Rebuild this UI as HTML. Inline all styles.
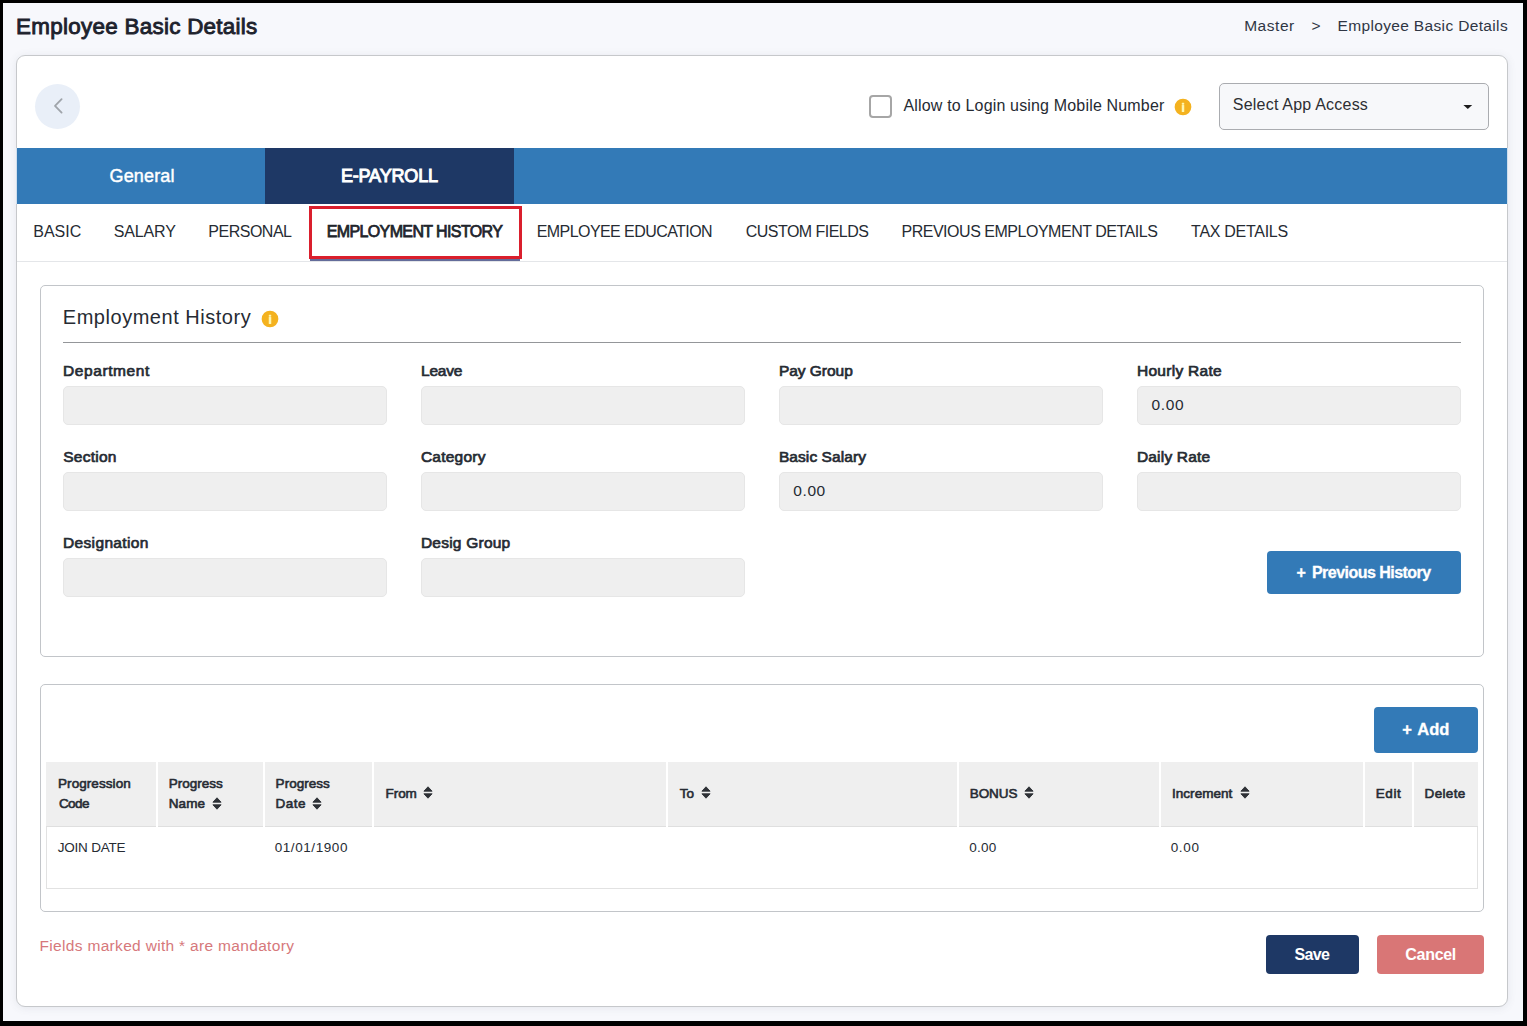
<!DOCTYPE html>
<html lang="en">
<head>
<meta charset="utf-8">
<title>Employee Basic Details</title>
<style>
*{box-sizing:border-box;margin:0;padding:0}
html,body{width:1527px;height:1026px;overflow:hidden;background:#000}
body{font-family:"Liberation Sans",sans-serif;position:relative}
.a{position:absolute}
.t{position:absolute;white-space:nowrap;font-style:normal}
#page{left:3px;top:3px;width:1520px;height:1018px;background:#f7f8fc}
#card{left:16px;top:55px;width:1492px;height:952px;background:#fff;border:1px solid #c6c8cb;border-radius:9px;box-shadow:0 1px 8px rgba(80,90,110,.11)}
#back{left:35px;top:84px;width:45px;height:45px;border-radius:50%;background:#e9eff8}
#chk{left:869px;top:95px;width:23px;height:23px;border:2px solid #a6a6a6;border-radius:4px;background:#fff}
.info{width:20px;height:20px}
#select{left:1219px;top:83px;width:270px;height:47px;border:1px solid #aaacb0;border-radius:5px;background:#f7f8fa}
#caret{left:1463px;top:104px;width:10px;height:6px}
#bar{left:17px;top:148px;width:1490px;height:56px;background:#337ab7;box-shadow:-1px 0 0 #cfdfee,1px 0 0 #cfdfee}
#tabon{left:265px;top:148px;width:249px;height:56px;background:#1e3865}
#subline{left:17px;top:261px;width:1490px;height:1px;background:#e4e6e9}
#actline{left:310px;top:259px;width:210px;height:2px;background:#636c9a}
#redbox{left:309px;top:206px;width:213px;height:53px;border:3px solid #da1f2d}
.box{left:40px;width:1444px;border:1px solid #c2c5c9;border-radius:5px;background:#fff}
#hr{left:63px;top:342px;width:1398px;height:1px;background:#949699}
.fi{width:324px;height:39px;background:#efefef;border:1px solid #e6e6e6;border-radius:5px}
.btn{border-radius:4px}
#thead{left:46px;top:762px;width:1432px;height:65px;background:#efefef;border-bottom:1px solid #dfdfdf}
.sep{top:762px;width:2px;height:65px;background:#fff}
#tbody{left:46px;top:827px;width:1432px;height:62px;border:1px solid #e2e2e2;border-top:0}
.sort{width:10px;height:13px}
</style>
</head>
<body>
<div class="a" id="page"></div>

<!-- page header -->
<span class="t" id="title" style="left:16.10px;top:12.64px;font-size:22.4px;line-height:28px;font-weight:400;color:#1d222d;letter-spacing:0.286px;-webkit-text-stroke:0.9px #1d222d">Employee Basic Details</span>
<span class="t" id="c1" style="left:1244.18px;top:16.33px;font-size:15.5px;line-height:19px;font-weight:400;color:#2f3644;letter-spacing:0.540px">Master</span><span class="t" id="c2" style="left:1311.50px;top:16.33px;font-size:15.5px;line-height:19px;font-weight:400;color:#2f3644;letter-spacing:0.000px">&gt;</span><span class="t" id="c3" style="left:1337.49px;top:16.33px;font-size:15.5px;line-height:19px;font-weight:400;color:#2f3644;letter-spacing:0.350px">Employee Basic Details</span>

<!-- main card -->
<div class="a" id="card"></div>
<div class="a" id="back"><svg width="45" height="45" viewBox="0 0 45 45"><path d="M26.6 15.2 L20 21.9 L26.6 28.6" fill="none" stroke="#9fa4aa" stroke-width="1.8" stroke-linecap="round" stroke-linejoin="round"/></svg></div>
<div class="a" id="chk"></div>
<span class="t" id="allow" style="left:903.52px;top:96.36px;font-size:16px;line-height:20px;font-weight:400;color:#262b33;letter-spacing:0.168px">Allow to Login using Mobile Number</span>
<svg class="a info" style="left:1173.1px;top:96.7px" viewBox="0 0 20 20"><circle cx="10" cy="10" r="8.35" fill="#f4b21f"/><rect x="8.75" y="5.8" width="2.5" height="1.9" rx=".6" fill="#fff7b0"/><rect x="8.75" y="8" width="2.5" height="7" rx=".6" fill="#fff7b0"/></svg>
<div class="a" id="select"></div>
<span class="t" id="sel" style="left:1232.79px;top:95.36px;font-size:16px;line-height:20px;font-weight:400;color:#2d2f33;letter-spacing:0.216px">Select App Access</span>
<svg class="a" id="caret" viewBox="0 0 10 6"><path d="M0.4 0.9 H9.2 L4.8 4.9Z" fill="#1c1c1c"/></svg>

<!-- main tabs -->
<div class="a" id="bar"></div>
<div class="a" id="tabon"></div>
<span class="t" id="general" style="left:109.55px;top:165.16px;font-size:18px;line-height:22px;font-weight:400;color:#fff;letter-spacing:0.139px;-webkit-text-stroke:0.45px #fff">General</span><span class="t" id="epay" style="left:340.90px;top:165.36px;font-size:18px;line-height:22px;font-weight:400;color:#fff;letter-spacing:-0.149px;-webkit-text-stroke:1px #fff">E-PAYROLL</span>

<!-- sub tabs -->
<div class="a" id="subline"></div>
<div class="a" id="actline"></div>
<span class="t" id="st1" style="left:33.29px;top:221.66px;font-size:16px;line-height:20px;font-weight:400;color:#262b33;letter-spacing:-0.024px">BASIC</span><span class="t" id="st2" style="left:113.65px;top:221.66px;font-size:16px;line-height:20px;font-weight:400;color:#262b33;letter-spacing:-0.133px">SALARY</span><span class="t" id="st3" style="left:208.29px;top:221.66px;font-size:16px;line-height:20px;font-weight:400;color:#262b33;letter-spacing:-0.489px">PERSONAL</span><span class="t" id="st4" style="left:326.63px;top:221.86px;font-size:16px;line-height:20px;font-weight:400;color:#20242b;letter-spacing:-0.613px;-webkit-text-stroke:0.75px #20242b">EMPLOYMENT HISTORY</span><span class="t" id="st5" style="left:536.72px;top:221.66px;font-size:16px;line-height:20px;font-weight:400;color:#262b33;letter-spacing:-0.568px">EMPLOYEE EDUCATION</span><span class="t" id="st6" style="left:745.73px;top:221.66px;font-size:16px;line-height:20px;font-weight:400;color:#262b33;letter-spacing:-0.524px">CUSTOM FIELDS</span><span class="t" id="st7" style="left:901.47px;top:221.66px;font-size:16px;line-height:20px;font-weight:400;color:#262b33;letter-spacing:-0.479px">PREVIOUS EMPLOYMENT DETAILS</span><span class="t" id="st8" style="left:1191.10px;top:221.66px;font-size:16px;line-height:20px;font-weight:400;color:#262b33;letter-spacing:-0.281px">TAX DETAILS</span>
<div class="a" id="redbox"></div>

<!-- employment history form -->
<div class="a box" style="top:285px;height:372px"></div>
<span class="t" id="h2" style="left:62.83px;top:304.97px;font-size:20px;line-height:25px;font-weight:400;color:#262b33;letter-spacing:0.523px">Employment History</span>
<svg class="a info" style="left:259.9px;top:308.8px" viewBox="0 0 20 20"><circle cx="10" cy="10" r="8.35" fill="#f4b21f"/><rect x="8.75" y="5.8" width="2.5" height="1.9" rx=".6" fill="#fff7b0"/><rect x="8.75" y="8" width="2.5" height="7" rx=".6" fill="#fff7b0"/></svg>
<div class="a" id="hr"></div>
<span class="t" id="l1" style="left:62.92px;top:361.33px;font-size:15.5px;line-height:19px;font-weight:400;color:#262b33;letter-spacing:0.610px;-webkit-text-stroke:0.7px #262b33">Department</span><span class="t" id="l2" style="left:421.04px;top:361.33px;font-size:15.5px;line-height:19px;font-weight:400;color:#262b33;letter-spacing:-0.209px;-webkit-text-stroke:0.7px #262b33">Leave</span><span class="t" id="l3" style="left:778.92px;top:361.33px;font-size:15.5px;line-height:19px;font-weight:400;color:#262b33;letter-spacing:-0.023px;-webkit-text-stroke:0.7px #262b33">Pay Group</span><span class="t" id="l4" style="left:1136.92px;top:361.33px;font-size:15.5px;line-height:19px;font-weight:400;color:#262b33;letter-spacing:0.292px;-webkit-text-stroke:0.7px #262b33">Hourly Rate</span>
<div class="a fi" style="left:63px;top:386px"></div>
<div class="a fi" style="left:421px;top:386px"></div>
<div class="a fi" style="left:779px;top:386px"></div>
<div class="a fi" style="left:1137px;top:386px"></div>
<span class="t" id="v1" style="left:1151.50px;top:395.03px;font-size:15.5px;line-height:19px;font-weight:400;color:#262b33;letter-spacing:0.621px">0.00</span>
<span class="t" id="l5" style="left:63.14px;top:447.33px;font-size:15.5px;line-height:19px;font-weight:400;color:#262b33;letter-spacing:0.272px;-webkit-text-stroke:0.7px #262b33">Section</span><span class="t" id="l6" style="left:420.96px;top:447.33px;font-size:15.5px;line-height:19px;font-weight:400;color:#262b33;letter-spacing:0.220px;-webkit-text-stroke:0.7px #262b33">Category</span><span class="t" id="l7" style="left:778.92px;top:447.33px;font-size:15.5px;line-height:19px;font-weight:400;color:#262b33;letter-spacing:0.085px;-webkit-text-stroke:0.7px #262b33">Basic Salary</span><span class="t" id="l8" style="left:1136.92px;top:447.33px;font-size:15.5px;line-height:19px;font-weight:400;color:#262b33;letter-spacing:0.198px;-webkit-text-stroke:0.7px #262b33">Daily Rate</span>
<div class="a fi" style="left:63px;top:472px"></div>
<div class="a fi" style="left:421px;top:472px"></div>
<div class="a fi" style="left:779px;top:472px"></div>
<div class="a fi" style="left:1137px;top:472px"></div>
<span class="t" id="v2" style="left:793.35px;top:481.03px;font-size:15.5px;line-height:19px;font-weight:400;color:#262b33;letter-spacing:0.578px">0.00</span>
<span class="t" id="l9" style="left:62.92px;top:533.33px;font-size:15.5px;line-height:19px;font-weight:400;color:#262b33;letter-spacing:0.369px;-webkit-text-stroke:0.7px #262b33">Designation</span><span class="t" id="l10" style="left:420.92px;top:533.33px;font-size:15.5px;line-height:19px;font-weight:400;color:#262b33;letter-spacing:0.232px;-webkit-text-stroke:0.7px #262b33">Desig Group</span>
<div class="a fi" style="left:63px;top:558px"></div>
<div class="a fi" style="left:421px;top:558px"></div>
<div class="a btn" style="left:1267px;top:551px;width:194px;height:43px;background:#337ab7"></div>
<span class="t" id="prev" style="left:1296.52px;top:563.46px;font-size:16px;line-height:20px;font-weight:700;color:#fff;letter-spacing:-0.529px;-webkit-text-stroke:0.3px #fff">+<i style="display:inline-block;width:2.7px"></i> Previous History</span>

<!-- progression table -->
<div class="a box" style="top:684px;height:228px"></div>
<div class="a btn" style="left:1374px;top:707px;width:104px;height:46px;background:#337ab7"></div>
<span class="t" id="add" style="left:1402.35px;top:718.98px;font-size:16.5px;line-height:21px;font-weight:700;color:#fff;letter-spacing:0.097px;-webkit-text-stroke:0.3px #fff">+<i style="display:inline-block;width:1.0px"></i> Add</span>
<div class="a" id="thead"></div>
<div class="a sep" style="left:156px"></div>
<div class="a sep" style="left:263px"></div>
<div class="a sep" style="left:372px"></div>
<div class="a sep" style="left:666px"></div>
<div class="a sep" style="left:957px"></div>
<div class="a sep" style="left:1159px"></div>
<div class="a sep" style="left:1363px"></div>
<div class="a sep" style="left:1412px"></div>
<div class="a" id="tbody"></div>
<span class="t" id="th1a" style="left:58.03px;top:774.82px;font-size:13.5px;line-height:17px;font-weight:400;color:#262b33;letter-spacing:0.067px;-webkit-text-stroke:0.6px #262b33">Progression</span><span class="t" id="th1b" style="left:58.90px;top:794.82px;font-size:13.5px;line-height:17px;font-weight:400;color:#262b33;letter-spacing:-0.579px;-webkit-text-stroke:0.6px #262b33">Code</span><span class="t" id="th2a" style="left:168.86px;top:774.82px;font-size:13.5px;line-height:17px;font-weight:400;color:#262b33;letter-spacing:-0.002px;-webkit-text-stroke:0.6px #262b33">Progress</span><span class="t" id="th2b" style="left:168.81px;top:794.82px;font-size:13.5px;line-height:17px;font-weight:400;color:#262b33;letter-spacing:0.038px;-webkit-text-stroke:0.6px #262b33">Name</span><span class="t" id="th3a" style="left:275.61px;top:774.82px;font-size:13.5px;line-height:17px;font-weight:400;color:#262b33;letter-spacing:0.015px;-webkit-text-stroke:0.6px #262b33">Progress</span><span class="t" id="th3b" style="left:275.59px;top:794.82px;font-size:13.5px;line-height:17px;font-weight:400;color:#262b33;letter-spacing:0.441px;-webkit-text-stroke:0.6px #262b33">Date</span><span class="t" id="th4" style="left:385.55px;top:784.72px;font-size:13.5px;line-height:17px;font-weight:400;color:#262b33;letter-spacing:-0.070px;-webkit-text-stroke:0.6px #262b33">From</span><span class="t" id="th5" style="left:679.78px;top:784.72px;font-size:13.5px;line-height:17px;font-weight:400;color:#262b33;letter-spacing:-0.138px;-webkit-text-stroke:0.6px #262b33">To</span><span class="t" id="th6" style="left:969.81px;top:784.72px;font-size:13.5px;line-height:17px;font-weight:400;color:#262b33;letter-spacing:-0.091px;-webkit-text-stroke:0.6px #262b33">BONUS</span><span class="t" id="th7" style="left:1171.91px;top:784.72px;font-size:13.5px;line-height:17px;font-weight:400;color:#262b33;letter-spacing:0.055px;-webkit-text-stroke:0.6px #262b33">Increment</span><span class="t" id="th8" style="left:1375.85px;top:784.72px;font-size:13.5px;line-height:17px;font-weight:400;color:#262b33;letter-spacing:0.514px;-webkit-text-stroke:0.6px #262b33">Edit</span><span class="t" id="th9" style="left:1424.57px;top:784.72px;font-size:13.5px;line-height:17px;font-weight:400;color:#262b33;letter-spacing:0.335px;-webkit-text-stroke:0.6px #262b33">Delete</span>
<svg class="a sort" style="left:211.7px;top:796.6px" viewBox="0 0 10 13"><path d="M5 0.8 L9.1 5.2 H0.9Z M5 12.2 L9.1 7.8 H0.9Z" fill="#2e3136" stroke="#2e3136" stroke-width="0.9" stroke-linejoin="round"/></svg>
<svg class="a sort" style="left:311.8px;top:796.6px" viewBox="0 0 10 13"><path d="M5 0.8 L9.1 5.2 H0.9Z M5 12.2 L9.1 7.8 H0.9Z" fill="#2e3136" stroke="#2e3136" stroke-width="0.9" stroke-linejoin="round"/></svg>
<svg class="a sort" style="left:423.2px;top:786.4px" viewBox="0 0 10 13"><path d="M5 0.8 L9.1 5.2 H0.9Z M5 12.2 L9.1 7.8 H0.9Z" fill="#2e3136" stroke="#2e3136" stroke-width="0.9" stroke-linejoin="round"/></svg>
<svg class="a sort" style="left:700.7px;top:786.4px" viewBox="0 0 10 13"><path d="M5 0.8 L9.1 5.2 H0.9Z M5 12.2 L9.1 7.8 H0.9Z" fill="#2e3136" stroke="#2e3136" stroke-width="0.9" stroke-linejoin="round"/></svg>
<svg class="a sort" style="left:1024.4px;top:786.4px" viewBox="0 0 10 13"><path d="M5 0.8 L9.1 5.2 H0.9Z M5 12.2 L9.1 7.8 H0.9Z" fill="#2e3136" stroke="#2e3136" stroke-width="0.9" stroke-linejoin="round"/></svg>
<svg class="a sort" style="left:1239.7px;top:786.4px" viewBox="0 0 10 13"><path d="M5 0.8 L9.1 5.2 H0.9Z M5 12.2 L9.1 7.8 H0.9Z" fill="#2e3136" stroke="#2e3136" stroke-width="0.9" stroke-linejoin="round"/></svg>
<span class="t" id="td1" style="left:57.79px;top:838.82px;font-size:13.5px;line-height:17px;font-weight:400;color:#262b33;letter-spacing:-0.228px">JOIN DATE</span><span class="t" id="td3" style="left:274.67px;top:838.82px;font-size:13.5px;line-height:17px;font-weight:400;color:#262b33;letter-spacing:0.580px">01/01/1900</span><span class="t" id="td6" style="left:969.13px;top:838.82px;font-size:13.5px;line-height:17px;font-weight:400;color:#262b33;letter-spacing:0.289px">0.00</span><span class="t" id="td7" style="left:1170.67px;top:838.82px;font-size:13.5px;line-height:17px;font-weight:400;color:#262b33;letter-spacing:0.653px">0.00</span>

<!-- footer -->
<span class="t" id="mand" style="left:39.54px;top:936.43px;font-size:15.5px;line-height:19px;font-weight:400;color:#d6787b;letter-spacing:0.320px">Fields marked with * are mandatory</span>
<div class="a btn" style="left:1266px;top:935px;width:93px;height:39px;background:#1e3865"></div>
<span class="t" id="save" style="left:1294.40px;top:945.06px;font-size:16px;line-height:20px;font-weight:700;color:#fff;letter-spacing:-0.613px">Save</span>
<div class="a btn" style="left:1377px;top:935px;width:107px;height:39px;background:#d97676"></div>
<span class="t" id="cancel" style="left:1405.31px;top:945.06px;font-size:16px;line-height:20px;font-weight:700;color:#fff;letter-spacing:-0.293px">Cancel</span>
</body>
</html>
